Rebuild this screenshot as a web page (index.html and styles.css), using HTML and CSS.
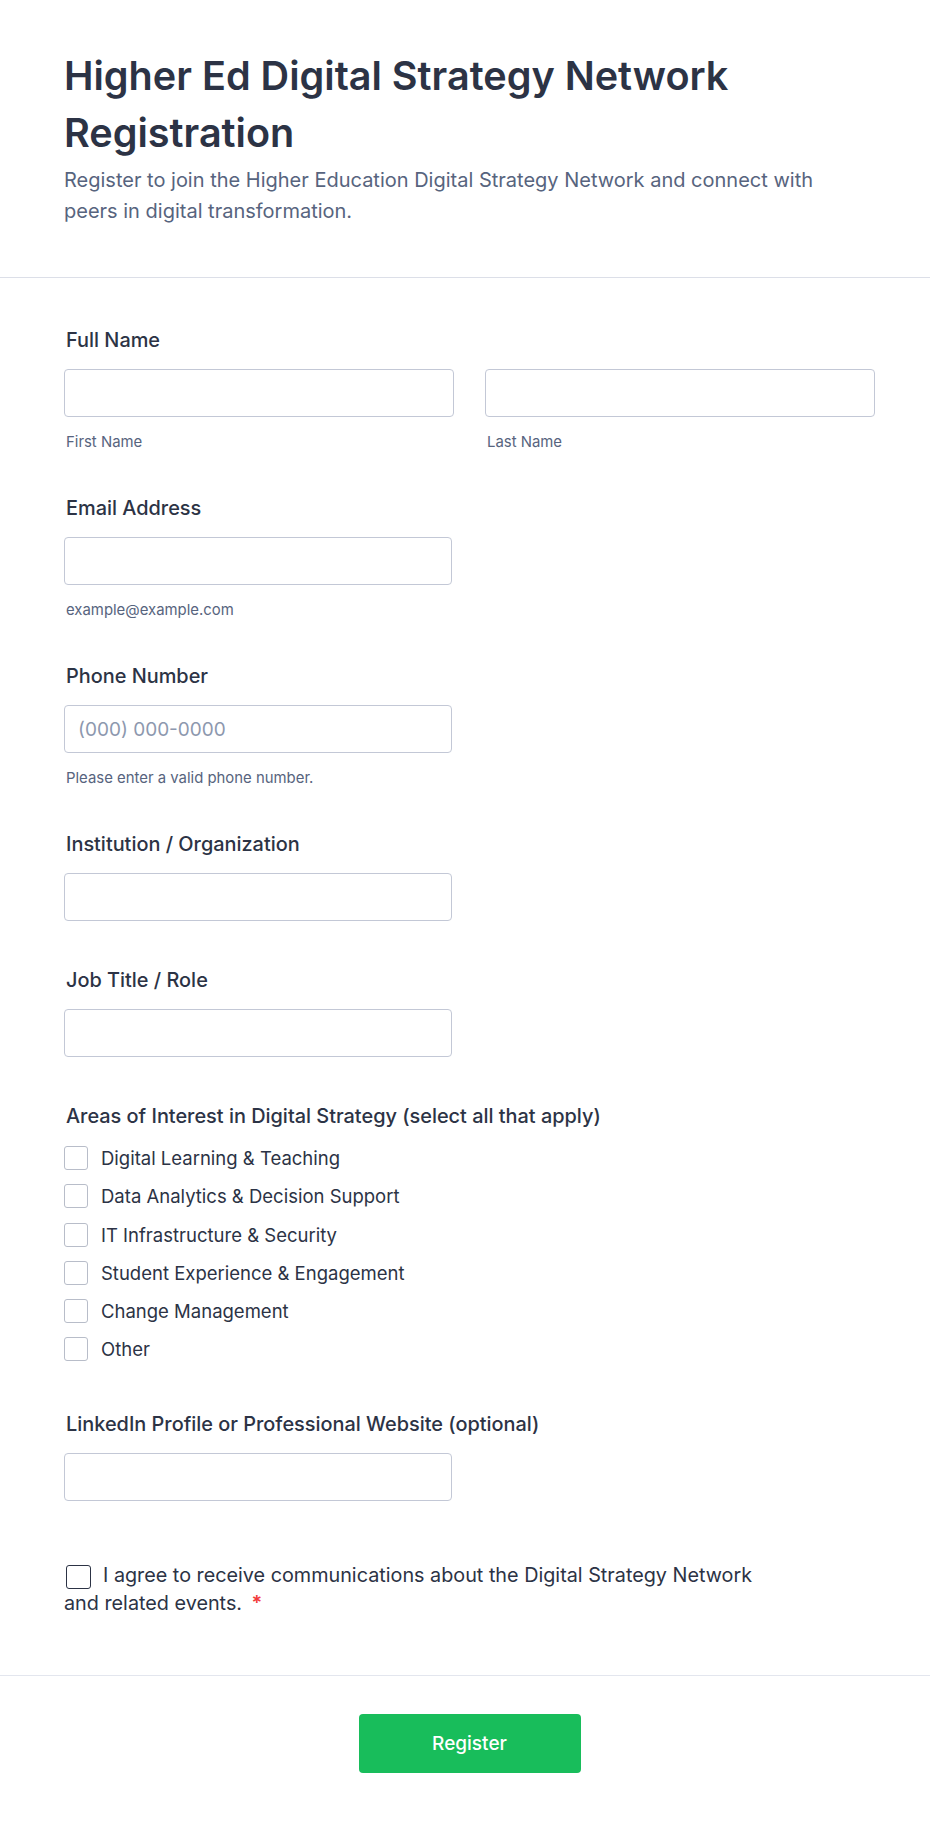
FILE: index.html
```html
<!DOCTYPE html>
<html lang="en">
  <head>
    <meta charset="UTF-8" />
    <meta name="viewport" content="width=device-width, initial-scale=1.0" />
    <title>Higher Ed Digital Strategy Network Registration</title>
    <link rel="stylesheet" href="styles.css">
  </head>
  <body>
    <!-- Header -->
    <div class="header">
      <h1>Higher Ed Digital Strategy Network Registration</h1>
      <p class="subtitle">
        Register to join the Higher Education Digital Strategy Network and connect with
        peers in digital transformation.
      </p>
    </div>

    <form id="regForm">
      <div class="fields">
        <div class="field">
          <label class="field-label">Full Name</label>
          <div class="name-row">
            <div class="name-col">
              <input type="text" id="firstName" />
              <span class="sublabel">First Name</span>
            </div>
            <div class="name-col">
              <input type="text" id="lastName" />
              <span class="sublabel">Last Name</span>
            </div>
          </div>
        </div>

        <div class="field">
          <label class="field-label" for="email">Email Address</label>
          <input type="email" id="email" class="single" />
          <span class="sublabel">example@example.com</span>
        </div>

        <div class="field">
          <label class="field-label" for="phone">Phone Number</label>
          <input type="tel" id="phone" class="single" placeholder="(000) 000-0000" />
          <span class="sublabel">Please enter a valid phone number.</span>
        </div>

        <div class="field">
          <label class="field-label" for="institution">Institution / Organization</label>
          <input type="text" id="institution" class="single" />
        </div>

        <div class="field">
          <label class="field-label" for="jobTitle">Job Title / Role</label>
          <input type="text" id="jobTitle" class="single" />
        </div>

        <div class="field">
          <label class="field-label">Areas of Interest in Digital Strategy (select all that apply)</label>
          <div class="checklist">
            <label class="check"><input type="checkbox" /><span>Digital Learning &amp; Teaching</span></label>
            <label class="check"><input type="checkbox" /><span>Data Analytics &amp; Decision Support</span></label>
            <label class="check"><input type="checkbox" /><span>IT Infrastructure &amp; Security</span></label>
            <label class="check"><input type="checkbox" /><span>Student Experience &amp; Engagement</span></label>
            <label class="check"><input type="checkbox" /><span>Change Management</span></label>
            <label class="check"><input type="checkbox" /><span>Other</span></label>
          </div>
        </div>

        <div class="field">
          <label class="field-label" for="website">LinkedIn Profile or Professional Website (optional)</label>
          <input type="url" id="website" class="single" />
        </div>

        <div class="agree">
          <label>
            <input type="checkbox" id="agree" required /><span>I agree to receive communications about the Digital Strategy Network</span>
            <span>and related events.</span> <span class="required">*</span>
          </label>
        </div>
      </div>

      <div class="actions">
        <button type="submit">Register</button>
      </div>
    </form>
  </body>
</html>
```

FILE: styles.css
```css
body {
  font-family: Inter, "Noto Sans", sans-serif;
  background-color: #fff;
  color: #2c3345;
  margin: 0;
  padding: 0;
}
.header {
  padding: 48px 55px 50px 64px;
  border-bottom: 1px solid #dcdfe8;
}
.header h1 {
  font-size: 39.6px;
  font-weight: 600;
  line-height: 57px;
  margin: 0;
  color: #2c3345;
}
.subtitle {
  font-size: 20px;
  line-height: 31px;
  color: #57647e;
  margin: 3px 0 0;
  max-width: 770px;
}
.fields {
  padding: 50px 55px 58px 64px;
  border-bottom: 1px solid #e3e6ee;
}
.field {
  display: flex;
  flex-direction: column;
  align-items: flex-start;
  margin-bottom: 46.7px;
}
.field-label {
  font-size: 19.9px;
  font-weight: 500;
  line-height: 24px;
  margin-bottom: 17.3px;
  padding-left: 2px;
}
.name-row {
  display: flex;
  gap: 31px;
  width: 100%;
}
.name-col {
  flex: 1;
  display: flex;
  flex-direction: column;
}
input[type="text"],
input[type="email"],
input[type="tel"],
input[type="url"] {
  box-sizing: border-box;
  height: 48px;
  width: 100%;
  border: 1px solid #c3c8d6;
  border-radius: 4px;
  padding: 0 13px;
  font-family: inherit;
  font-size: 19px;
  color: #2c3345;
  background: #fff;
}
input.single {
  width: 388px;
}
input::placeholder {
  color: #8d98ae;
}
.sublabel {
  font-size: 14.9px;
  line-height: 18px;
  color: #57647e;
  margin-top: 15.5px;
  margin-bottom: -1.5px;
  padding-left: 2px;
}
.checklist {
  display: flex;
  flex-direction: column;
  gap: 14.2px;
  margin-top: 1px;
  margin-bottom: 4px;
}
.check {
  display: flex;
  align-items: center;
  font-size: 18.5px;
  line-height: 24px;
}
.check input {
  appearance: none;
  box-sizing: border-box;
  width: 24px;
  height: 24px;
  margin: 0 13px 0 0;
  border: 1px solid #b8bdc9;
  border-radius: 3px;
  background: #fff;
}
.agree {
  padding-top: 13px;
  font-size: 19.8px;
  line-height: 28px;
  max-width: 710px;
}
.agree input {
  appearance: none;
  box-sizing: border-box;
  width: 25px;
  height: 24px;
  margin: 0 12px 0 2px;
  vertical-align: -7px;
  border: 1.5px solid #2c3345;
  border-radius: 3px;
  background: #fff;
}
.required {
  color: #f23a3c;
  font-weight: 600;
  margin-left: 4px;
}
.actions {
  display: flex;
  justify-content: center;
  padding: 38px 55px 50px 64px;
}
button {
  background-color: #18bd5b;
  color: white;
  border: none;
  width: 222px;
  height: 59px;
  font-family: inherit;
  font-size: 19px;
  font-weight: 500;
  border-radius: 4px;
  cursor: pointer;
}
```
